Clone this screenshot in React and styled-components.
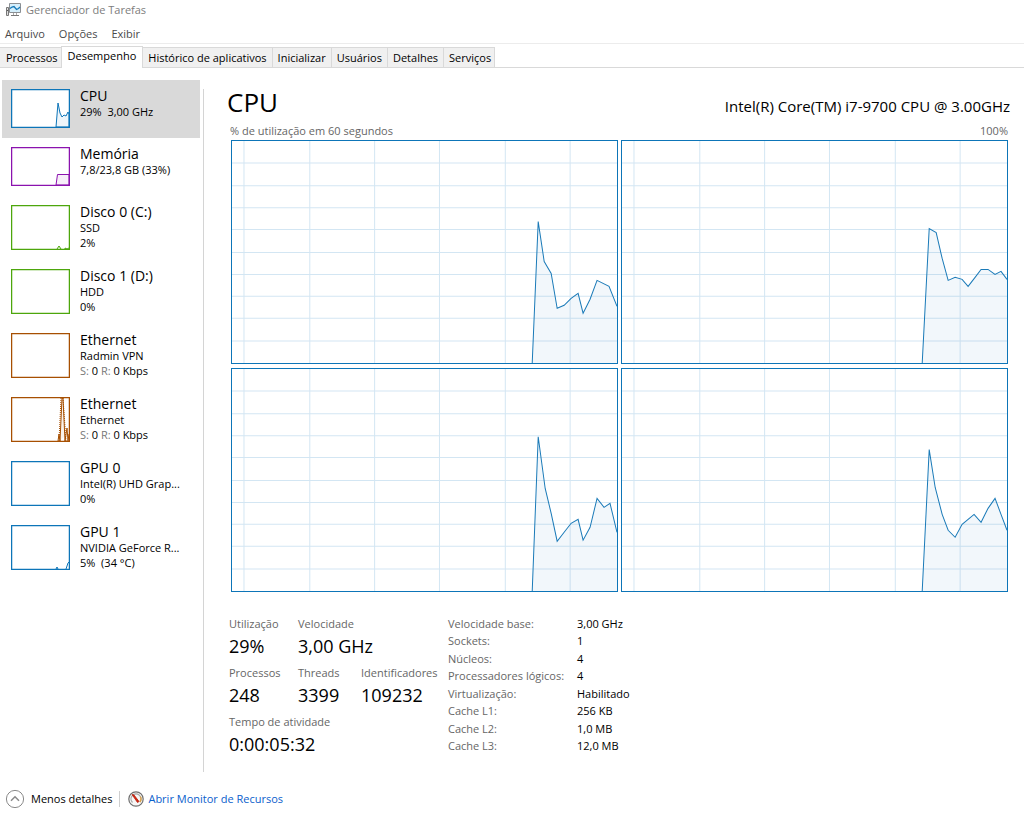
import React from "react";
import styled, { createGlobalStyle } from "styled-components";

const GlobalStyle = createGlobalStyle`
  *, *::before, *::after { box-sizing: border-box; }
  body {
    margin: 0;
    background: #fff;
    color: #000;
    font: 12px/16px "Open Sans", "Noto Sans", sans-serif;
  }
  button { font: inherit; color: inherit; }
`;

const Window = styled.div`
  display: flex;
  flex-direction: column;
  min-height: 100vh;
`;

const TitleBar = styled.header`
  display: flex;
  align-items: center;
  gap: 4px;
  height: 20px;
  padding: 0 6px;
  color: #7d7d7d;
  font-size: 11px;
`;

const MenuBar = styled.nav`
  display: flex;
  align-items: center;
  gap: 14px;
  height: 24px;
  padding: 4px 5px 0;
  border-bottom: 1px solid #ececec;
`;

const MenuButton = styled.button`
  padding: 0;
  border: 0;
  background: none;
  color: #4a4a4a;
  font-size: 11px;
`;

const TabStrip = styled.div`
  display: flex;
  align-items: flex-end;
  height: 24px;
  border-bottom: 1px solid #d9d9d9;
`;

const Tab = styled.button`
  height: ${(p) => (p.$active ? 22 : 20)}px;
  margin-bottom: ${(p) => (p.$active ? -1 : 0)}px;
  padding: ${(p) => (p.$active ? "0 6px 3px" : "0 5px")};
  border: 1px solid #d9d9d9;
  border-bottom: 0;
  border-left-width: ${(p) => (p.$active ? 1 : 0)}px;
  background: ${(p) => (p.$active ? "#fff" : "#f0f0f0")};
  font-size: 11px;
  line-height: 16px;
  white-space: nowrap;
  &:first-child {
    padding: 0 3px 0 6px;
    border-right: 0;
  }
  &:last-child { padding-right: 3px; }
`;

const Body = styled.div`
  display: flex;
  flex: 1;
  padding-top: 12px;
`;

const Sidebar = styled.aside`
  display: flex;
  flex-direction: column;
  flex: 0 0 198px;
  margin-left: 2px;
`;

const Divider = styled.div`
  width: 1px;
  margin: 9px 0 0 3px;
  background: #d4d4d4;
`;

const Resource = styled.button`
  display: flex;
  align-items: flex-start;
  gap: 10px;
  padding: 9px 8px 10px 9px;
  border: 0;
  background: ${(p) => (p.$active ? "#d9d9d9" : "transparent")};
  text-align: left;
`;

const Thumb = styled.svg`
  flex: none;
  width: 59px;
  height: ${(p) => (p.$tall ? 45 : 39)}px;
  stroke: ${(p) => p.$color};
`;

const ResourceText = styled.span`
  display: flex;
  flex-direction: column;
  min-width: 0;
  margin: -2px 0 -6px;
  font-size: 11px;
  line-height: 15px;
  white-space: pre;
`;

const ResourceName = styled.span`
  margin-bottom: -1px;
  font-size: 14px;
  line-height: 18px;
`;

const Muted = styled.span`
  color: #777;
`;

const Main = styled.main`
  display: flex;
  flex-direction: column;
  flex: 1;
  min-width: 0;
  padding: 6px 16px 16px 23px;
`;

const Heading = styled.div`
  display: flex;
  align-items: flex-start;
  justify-content: space-between;
  height: 36px;
  h1 {
    margin: 0;
    font-size: 26px;
    font-weight: 400;
    line-height: 32px;
  }
  h2 {
    margin: 10px -2px 0 0;
    font-size: 15px;
    font-weight: 400;
    line-height: 20px;
  }
`;

const AxisLabels = styled.div`
  display: flex;
  justify-content: space-between;
  padding: 0 0 0 3px;
  color: #666;
  font-size: 11px;
  line-height: 18px;
`;

const ChartGrid = styled.div`
  display: grid;
  flex: 1;
  grid-template-columns: 1fr 1fr;
  grid-auto-rows: 1fr;
  gap: 4px 3px;
  min-height: 300px;
  margin-left: 4px;
`;

const ChartBox = styled.div`
  display: flex;
  min-height: 0;
  border: 1px solid #0d75b8;
  svg {
    flex: 1;
    width: 0;
    height: 0;
    min-height: 100%;
  }
`;

const Details = styled.section`
  display: flex;
  align-items: flex-start;
  padding: 24px 0 0 2px;
`;

const Stats = styled.dl`
  display: grid;
  grid-template-columns: 69px 63px 87px;
  row-gap: 7px;
  margin: 0;
`;

const Stat = styled.div`
  grid-column: span ${(p) => p.$span || 1};
  dt {
    color: #666;
    font-size: 11px;
    line-height: 16px;
    white-space: nowrap;
  }
  dd {
    margin: 0;
    padding-top: 2px;
    font-size: 18px;
    line-height: 24px;
  }
`;

const Specs = styled.table`
  height: 140px;
  margin-top: -1px;
  border-spacing: 0;
  font-size: 11px;
  line-height: 16px;
  th, td {
    padding: 0;
    font-weight: 400;
    text-align: left;
    white-space: nowrap;
  }
  th {
    width: 129px;
    color: #666;
  }
`;

const Footer = styled.footer`
  display: flex;
  align-items: center;
  gap: 7px;
  height: 44px;
  padding: 10px 5px 0;
`;

const FooterButton = styled.button`
  display: flex;
  align-items: center;
  gap: 6px;
  padding: 0;
  border: 0;
  background: none;
  font-size: 11px;
`;

const FooterLink = styled.a`
  display: flex;
  align-items: center;
  gap: 4px;
  padding-left: 8px;
  border-left: 1px solid #cfcfcf;
  color: #0a60cc;
  font-size: 11px;
  text-decoration: none;
`;

const tabs = ["Processos", "Desempenho", "Histórico de aplicativos", "Inicializar", "Usuários", "Detalhes", "Serviços"];

const traffic = (
  <>
    <Muted>S:</Muted> 0 <Muted>R:</Muted> 0 Kbps
  </>
);

const BLUE = "#0d75b8";
const GREEN = "#4da60c";
const BROWN = "#a74f01";
const PURPLE = "#8b12ae";

const resources = [
  { name: "CPU", lines: ["29%  3,00 GHz"], color: BLUE, active: true, draw: "M45 38L47 14L49 24L51 28L53 26L55 27L57 23L58 25V38Z" },
  { name: "Memória", lines: ["7,8/23,8 GB (33%)"], color: PURPLE, draw: "M45 38L46.500 27.500H58V38Z" },
  { name: "Disco 0 (C:)", lines: ["SSD", "2%"], color: GREEN, draw: "M46 44L48 41L50 44M54 44V43L56 44L58 43" },
  { name: "Disco 1 (D:)", lines: ["HDD", "0%"], color: GREEN },
  { name: "Ethernet", lines: ["Radmin VPN", traffic], color: BROWN },
  {
    name: "Ethernet",
    lines: ["Ethernet", traffic],
    color: BROWN,
    draw: "M47 44L48 37L49 44L51 1L52 1L54 44L56 31L57 44L58 37",
    dashed: "M48 44L50 1M52 1L55 44",
  },
  { name: "GPU 0", lines: ["Intel(R) UHD Grap...", "0%"], color: BLUE },
  { name: "GPU 1", lines: ["NVIDIA GeForce R...", "5%  (34 °C)"], color: BLUE, draw: "M45 44L46 42L47 44M55 44L57 38L58 37" },
];

const charts = [
  "301,223 307,81 313,121 320,133 326,168 333,165 340,158 347,153 352,173 359,159 366,140 378,146 386,166",
  "301,223 308,88 315,92 321,118 327,140 334,137 341,139 347,146 354,137 360,129 367,129 374,134 380,131 386,139",
  "301,223 307,68 314,120 320,145 326,173 333,164 340,155 347,151 352,172 359,159 366,130 373,139 379,135 386,164",
  "301,223 308,81 314,119 321,146 327,162 334,169 341,156 347,151 353,146 360,154 367,140 374,130 380,146 386,162",
];

const specs = [
  ["Velocidade base:", "3,00 GHz"],
  ["Sockets:", "1"],
  ["Núcleos:", "4"],
  ["Processadores lógicos:", "4"],
  ["Virtualização:", "Habilitado"],
  ["Cache L1:", "256 KB"],
  ["Cache L2:", "1,0 MB"],
  ["Cache L3:", "12,0 MB"],
];

const stats = [
  { label: "Utilização", value: "29%" },
  { label: "Velocidade", value: "3,00 GHz", span: 2 },
  { label: "Processos", value: "248" },
  { label: "Threads", value: "3399" },
  { label: "Identificadores", value: "109232" },
  { label: "Tempo de atividade", value: "0:00:05:32", span: 3 },
];

const columns = [12, 78, 143, 208, 274, 339];
const rows = [1, 2, 3, 4, 5, 6, 7, 8, 9].map((n) => Math.round(n * 22.3));

function Chart({ points, label }) {
  return (
    <ChartBox>
      <svg viewBox="0 0 386 223" preserveAspectRatio="none" role="img" aria-label={label}>
        <g stroke="#d3e6f3" fill="none">
          {columns.map((x) => (
            <path key={x} d={`M${x} 0V223`} vectorEffect="non-scaling-stroke" />
          ))}
          {rows.map((y) => (
            <path key={y} d={`M0 ${y}H386`} vectorEffect="non-scaling-stroke" />
          ))}
        </g>
        <polygon points={`${points} 386,223`} fill="#1a7ab8" fillOpacity="0.06" />
        <polyline points={points} fill="none" stroke="#1a7ab8" vectorEffect="non-scaling-stroke" />
      </svg>
    </ChartBox>
  );
}

function ResourceThumb({ resource }) {
  const tall = resource.lines.length > 1;
  const height = tall ? 45 : 39;
  return (
    <Thumb $color={resource.color} $tall={tall} viewBox={`0 0 59 ${height}`} aria-hidden="true">
      <rect x="0.5" y="0.5" width="58" height={height - 1} fill="#fff" strokeWidth="1.5" />
      {resource.draw && <path d={resource.draw} fill={resource.color} fillOpacity="0.07" />}
      {resource.dashed && <path d={resource.dashed} fill="none" strokeDasharray="1 1" />}
    </Thumb>
  );
}

function MonitorIcon() {
  return (
    <svg width="16" height="16" viewBox="0 0 16 16" fill="none" aria-hidden="true">
      <path d="M0.5 5.5H2.5V13.5H0.5Z" fill="#ddd" stroke="#777" />
      <path d="M1 8.5H2" stroke="#555" />
      <path d="M3.5 1.5H14.5V10.5H3.5Z" fill="#d4effc" stroke="#8b8f93" />
      <path d="M4 6.5L6 5L8 4.500L10.500 7.500L12.500 6.500L14 5" stroke="#1478b8" strokeWidth="1.300" />
      <path d="M7.500 11V13M10.500 11V13" stroke="#aaa" />
      <path d="M5 13.500H13" stroke="#777" />
    </svg>
  );
}

function CollapseIcon() {
  return (
    <svg width="20" height="20" viewBox="0 0 20 20" fill="none" aria-hidden="true">
      <circle cx="10" cy="10" r="8.600" stroke="#8a8a8a" />
      <path d="M6 11.800L10 7.800L14 11.800" stroke="#8a8a8a" strokeWidth="1.500" />
    </svg>
  );
}

function GaugeIcon() {
  return (
    <svg width="16" height="16" viewBox="0 0 16 16" fill="none" aria-hidden="true">
      <circle cx="8" cy="8" r="7.200" fill="#f6f6f6" stroke="#6d6d6d" strokeWidth="1.200" />
      <path d="M4.500 11.500A5 5 0 1 1 12 11" stroke="#a9a9a9" strokeWidth="1.300" />
      <path d="M12.300 5.500A5 5 0 0 1 12 11" stroke="#dca34a" strokeWidth="1.300" />
      <path d="M4 3.500L6 4L11 10.500L9.500 11.500Z" fill="#d3200c" stroke="#b81e0c" strokeWidth="0.800" />
    </svg>
  );
}

export default function App() {
  return (
    <Window>
      <GlobalStyle />
      <TitleBar>
        <MonitorIcon />
        <span>Gerenciador de Tarefas</span>
      </TitleBar>
      <MenuBar>
        <MenuButton>Arquivo</MenuButton>
        <MenuButton>Opções</MenuButton>
        <MenuButton>Exibir</MenuButton>
      </MenuBar>
      <TabStrip role="tablist">
        {tabs.map((tab) => (
          <Tab key={tab} role="tab" aria-selected={tab === "Desempenho"} $active={tab === "Desempenho"}>
            {tab}
          </Tab>
        ))}
      </TabStrip>
      <Body>
        <Sidebar>
          {resources.map((r, i) => (
            <Resource key={i} $active={r.active}>
              <ResourceThumb resource={r} />
              <ResourceText>
                <ResourceName>{r.name}</ResourceName>
                {r.lines.map((line, n) => (
                  <span key={n}>{line}</span>
                ))}
              </ResourceText>
            </Resource>
          ))}
        </Sidebar>
        <Divider />
        <Main>
          <Heading>
            <h1>CPU</h1>
            <h2>Intel(R) Core(TM) i7-9700 CPU @ 3.00GHz</h2>
          </Heading>
          <AxisLabels>
            <span>% de utilização em 60 segundos</span>
            <span>100%</span>
          </AxisLabels>
          <ChartGrid>
            {charts.map((points, i) => (
              <Chart key={i} points={points} label={`CPU ${i}`} />
            ))}
          </ChartGrid>
          <Details>
            <Stats>
              {stats.map((s) => (
                <Stat key={s.label} $span={s.span}>
                  <dt>{s.label}</dt>
                  <dd>{s.value}</dd>
                </Stat>
              ))}
            </Stats>
            <Specs>
              <tbody>
                {specs.map(([label, value]) => (
                  <tr key={label}>
                    <th scope="row">{label}</th>
                    <td>{value}</td>
                  </tr>
                ))}
              </tbody>
            </Specs>
          </Details>
        </Main>
      </Body>
      <Footer>
        <FooterButton>
          <CollapseIcon />
          Menos detalhes
        </FooterButton>
        <FooterLink href="#monitor">
          <GaugeIcon />
          Abrir Monitor de Recursos
        </FooterLink>
      </Footer>
    </Window>
  );
}
